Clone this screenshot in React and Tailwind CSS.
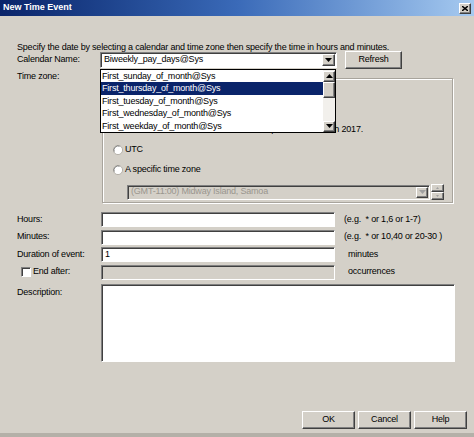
import React from "react";

const sunken =
  "border border-t-[#808080] border-l-[#808080] border-b-white border-r-white shadow-[inset_1px_1px_0_#404040]";
const raised =
  "border border-t-white border-l-white border-b-[#404040] border-r-[#404040] shadow-[inset_-1px_-1px_0_#808080] bg-[#d4d0c8]";

const Arrow = ({ up = false, color = "#000" }) => (
  <svg width="7" height="4" viewBox="0 0 7 4">
    {up ? (
      <path d="M3.5 0 L7 4 L0 4 Z" fill={color} />
    ) : (
      <path d="M0 0 L7 0 L3.5 4 Z" fill={color} />
    )}
  </svg>
);

const Radio = () => (
  <svg width="10" height="10" viewBox="0 0 12 12">
    <circle cx="6" cy="6" r="5.5" fill="#fff" stroke="#aaa69e" />
    <path d="M1.5 8 A5 5 0 0 1 8 1.5" fill="none" stroke="#707070" />
  </svg>
);

const Field = ({ label, value = "", disabled = false, hint, hintMl = "ml-[8px]", check = false, mt = "mt-[2.5px]" }) => (
  <div className={`flex items-center h-[15px] ${mt}`}>
    <div className="w-[84px] flex items-center">
      {check && <span className={`w-[10px] h-[10px] bg-white ml-[4px] mr-[2px] ${sunken}`} />}
      <span>{label}</span>
    </div>
    <div
      className={`w-[234px] h-[15px] ${sunken} ${disabled ? "bg-[#d4d0c8]" : "bg-white"} pl-[3px] leading-[13px]`}
    >
      {value}
    </div>
    <span className={hintMl}>{hint}</span>
  </div>
);

const items = [
  "First_sunday_of_month@Sys",
  "First_thursday_of_month@Sys",
  "First_tuesday_of_month@Sys",
  "First_wednesday_of_month@Sys",
  "First_weekday_of_month@Sys",
];

export default function App() {
  return (
    <div
      className="w-[474px] h-[437px] bg-[#d4d0c8] flex flex-col relative overflow-hidden text-[9px] tracking-[-0.2px] text-black"
      style={{ fontFamily: '"Liberation Sans", Arial, sans-serif' }}
    >
      {/* title bar */}
      <div className="h-[16px] bg-linear-to-r from-[#0a246a] via-[#3a6ab8] to-[#a6caf0] flex items-center justify-between pl-[3px] pr-[3px]">
        <span className="text-white font-bold text-[9px] tracking-normal">New Time Event</span>
        <span className={`w-[12px] h-[11px] flex items-center justify-center ${raised}`}>
          <svg width="6" height="5" viewBox="0 0 6 5">
            <path d="M0 0 L6 5 M6 0 L0 5" stroke="#000" strokeWidth="1.4" />
          </svg>
        </span>
      </div>

      <div className="pl-[17px] pt-[27px] flex flex-col">
        <p className="h-[9px] leading-[9px]">
          Specify the date by selecting a calendar and time zone then specify the time in hours and minutes.
        </p>

        {/* calendar row */}
        <div className="flex items-center h-[17px] -mt-[1px]">
          <span className="w-[83px]">Calendar Name:</span>
          <div className={`w-[237px] h-[16px] bg-white flex items-center justify-between pl-[3px] pr-[1px] ${sunken}`}>
            <span>Biweekly_pay_days@Sys</span>
            <span className={`w-[13px] h-[12px] flex items-center justify-center ${raised}`}>
              <Arrow />
            </span>
          </div>
          <button className={`ml-[8px] w-[57px] h-[18px] ${raised}`}>Refresh</button>
        </div>

        {/* time zone */}
        <div className="flex items-start">
          <span className="w-[85px] mt-[2px] leading-[12px]">Time zone:</span>
          <div className="mt-[10px] w-[351px] h-[125px] border border-[#a8a49c] shadow-[inset_1px_1px_0_#fff,1px_1px_0_#fff] pt-[44px] flex flex-col">
            <div className="h-[12px] leading-[12px] ml-[24px] w-[236px] flex justify-end whitespace-nowrap overflow-hidden">
              <span className="shrink-0">Calendar has valid dates for the time period until March 2017.</span>
            </div>
            <div className="h-[12px] mt-[9px] flex items-center ml-[10px]">
              <Radio />
              <span className="ml-[2px]">UTC</span>
            </div>
            <div className="h-[12px] mt-[8px] flex items-center ml-[10px]">
              <Radio />
              <span className="ml-[2px]">A specific time zone</span>
            </div>
            <div className="mt-[8px] ml-[24px] flex items-center">
              <div className={`w-[303px] h-[15px] bg-[#d4d0c8] flex items-center justify-between pl-[3px] pr-[1px] text-[#9a968e] ${sunken}`}>
                <span>(GMT-11:00) Midway Island, Samoa</span>
                <span className={`w-[12px] h-[11px] flex items-center justify-center ${raised}`}>
                  <Arrow color="#a0a0a0" />
                </span>
              </div>
              <div className="ml-[1px] w-[13px] h-[16px] flex flex-col">
                <span className={`h-[8px] flex items-center justify-center ${raised}`}>
                  <svg width="3" height="2" viewBox="0 0 3 2"><path d="M1.5 0 L3 2 L0 2 Z" fill="#a0a0a0" /></svg>
                </span>
                <span className={`h-[8px] flex items-center justify-center ${raised}`}>
                  <svg width="3" height="2" viewBox="0 0 3 2"><path d="M0 0 L3 0 L1.5 2 Z" fill="#a0a0a0" /></svg>
                </span>
              </div>
            </div>
          </div>
        </div>

        <Field label="Hours:" hint="(e.g.  * or 1,6 or 1-7)" mt="mt-[9px]" hintMl="ml-[9px] whitespace-pre" />
        <Field label="Minutes:" hint="(e.g.  * or 10,40 or 20-30 )" hintMl="ml-[9px] whitespace-pre" />
        <Field label="Duration of event:" value="1" hint="minutes" hintMl="ml-[13px]" />
        <Field label="End after:" disabled check hint="occurrences" hintMl="ml-[13px]" />

        <div className="flex items-start mt-[4.5px]">
          <span className="w-[84px] mt-[2px] leading-[12px]">Description:</span>
          <div className={`w-[354px] h-[78px] bg-white ${sunken}`} />
        </div>

        <div className="flex justify-end pr-[7px] gap-[3px] mt-[49px]">
          <button className={`w-[53px] h-[18px] ${raised}`}>OK</button>
          <button className={`w-[53px] h-[18px] ${raised}`}>Cancel</button>
          <button className={`w-[53px] h-[18px] ${raised}`}>Help</button>
        </div>
      </div>

      <div className="mt-auto h-[4px] bg-[#b4b0a8]" />

      {/* open dropdown list */}
      <div className="absolute left-[100px] top-[68.5px] w-[236px] h-[64px] bg-white border border-black flex">
        <div className="flex-1 flex flex-col">
          {items.map((it, i) => (
            <div
              key={it}
              className={`h-[12.5px] leading-[12.5px] pl-[1px] ${i === 1 ? "bg-[#0a246a] text-white" : ""}`}
            >
              {it}
            </div>
          ))}
        </div>
        <div className="w-[12px] bg-[#f2f0ec] flex flex-col justify-between pt-[1px]">
          <div className="flex flex-col">
            <span className={`h-[11px] flex items-center justify-center ${raised}`}>
              <Arrow up />
            </span>
            <span className={`h-[16px] ${raised}`} />
          </div>
          <span className={`h-[11px] flex items-center justify-center ${raised}`}>
            <Arrow />
          </span>
        </div>
      </div>
    </div>
  );
}
